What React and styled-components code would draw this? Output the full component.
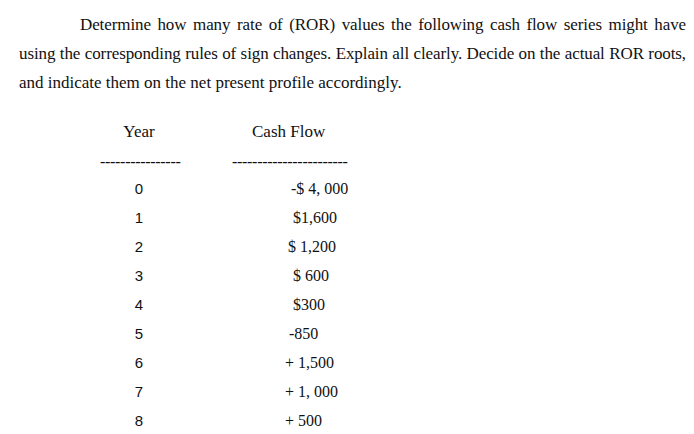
import React from "react";
import styled, { createGlobalStyle } from "styled-components";

const Global = createGlobalStyle`
  html, body { margin: 0; padding: 0; background: #fff; }
  body { font-family: "Liberation Serif", "Times New Roman", serif; color: #111; }
`;

const Page = styled.div`
  width: 694px;
  height: 434px;
  overflow: hidden;
  background: #fff;
`;

const Para = styled.div`
  padding: 10px 0 0 19px;
  width: 667px;
  font-size: 17px;
  line-height: 29px;
`;

const Line = styled.div`
  white-space: nowrap;
  padding-left: ${(p) => (p.$indent ? 61 : 0)}px;
  letter-spacing: ${(p) => (p.$justify ? "-0.1px" : "0")};
  word-spacing: ${(p) => (p.$justify ? "-0.5px" : "0")};
  text-align: ${(p) => (p.$justify ? "justify" : "left")};
  text-align-last: ${(p) => (p.$justify ? "justify" : "left")};
`;

const Table = styled.div`
  display: grid;
  grid-template-columns: 86px 123px;
  column-gap: 46px;
  margin: 20px 0 0 100px;
`;

const Head = styled.div`
  font-size: 17px;
  line-height: 29px;
  height: 29px;
  text-align: ${(p) => (p.$center ? "center" : "left")};
  padding: ${(p) => (p.$center ? "0 8px 0 0" : "0 0 0 20px")};
`;

const Dashes = styled.div`
  font-size: 16px;
  line-height: 24px;
  height: 24px;
  margin-top: 4px;
  overflow: hidden;
  white-space: nowrap;
  letter-spacing: -0.3px;
`;

const YearCell = styled.div`
  font-family: "Liberation Sans", Arial, sans-serif;
  font-size: 15px;
  line-height: 29px;
  height: 29px;
  text-align: center;
  padding-right: 8px;
`;

const FlowCell = styled.div`
  font-size: 16px;
  line-height: 29px;
  height: 29px;
  white-space: pre;
  padding-left: ${(p) => p.$indent}px;
`;

const rows = [
  ["0", "-$ 4, 000", 59],
  ["1", "$1,600", 61],
  ["2", "$ 1,200", 56],
  ["3", "$ 600", 61],
  ["4", "$300", 61],
  ["5", "-850", 57],
  ["6", "+ 1,500", 53],
  ["7", "+ 1, 000", 53],
  ["8", "+ 500", 53],
];

export default function App() {
  return (
    <Page>
      <Global />
      <Para>
        <Line $indent $justify>
          Determine how many rate of (ROR) values the following cash flow series might have
        </Line>
        <Line $justify>
          using the corresponding rules of sign changes. Explain all clearly. Decide on the actual ROR roots,
        </Line>
        <Line>and indicate them on the net present profile accordingly.</Line>
      </Para>
      <Table>
        <Head $center>Year</Head>
        <Head>Cash Flow</Head>
        <Dashes>{"----------------"}</Dashes>
        <Dashes>{"-----------------------"}</Dashes>
        {rows.map(([y, v, ind]) => (
          <React.Fragment key={y}>
            <YearCell>{y}</YearCell>
            <FlowCell $indent={ind}>{v}</FlowCell>
          </React.Fragment>
        ))}
      </Table>
    </Page>
  );
}
